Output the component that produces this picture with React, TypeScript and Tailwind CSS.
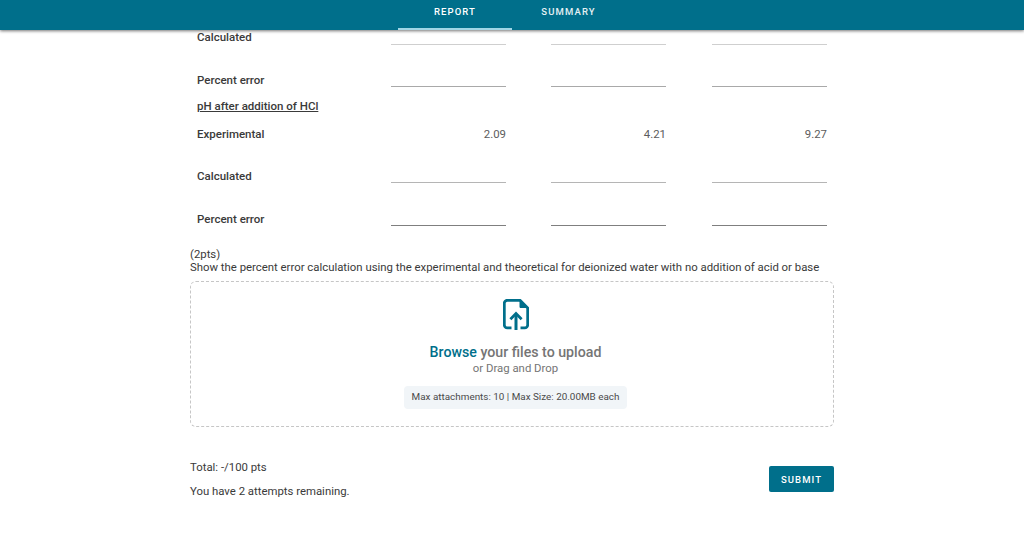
const Line = ({ color }: { color: string }) => <div className={`h-[1px] ${color}`} />;

function Row({ label, height, line, values, lift }: { label: string; height: string; line?: string; values?: string[]; lift?: boolean }) {
  return (
    <div className={`flex items-end ${height}`}>
      <div className={`w-[194px] h-[14px] text-[11.5px] leading-[14px] font-medium text-[#3a3a3a] ${lift ? "mb-[1px]" : ""}`}>{label}</div>
      {[0, 1, 2].map((i) => (
        <div key={i} className={`w-[115px] ${i === 1 ? "ml-[45px]" : i === 2 ? "ml-[46px]" : ""}`}>
          {values && <div className="h-[14px] text-right text-[11.375px] leading-[14px] text-[#5c5c5c]">{values[i]}</div>}
          {line && <Line color={line} />}
        </div>
      ))}
    </div>
  );
}

function UploadIcon() {
  return (
    <svg width="26" height="31" viewBox="0 0 26 31" fill="none" stroke="#006F8B" strokeWidth="2.8">
      <path d="M8.5 28.9H4.3a3 3 0 0 1-3-3V4.3a3 3 0 0 1 3-3H17l7.7 7.6v17a3 3 0 0 1-3 3H17.5" strokeLinejoin="round" />
      <path d="M17 2v6.5h7" fill="#006F8B" strokeWidth="1" />
      <path d="M13 31V15.5" strokeWidth="3" />
      <path d="M7.4 20.2L13 14.6l5.6 5.6" strokeWidth="2.8" />
    </svg>
  );
}

export default function App() {
  return (
    <div className="h-[545px] overflow-hidden bg-white font-['Roboto',sans-serif]">
      {/* Tabs */}
      <header className="relative z-10 flex h-[30px] justify-center bg-[#006F8B] shadow-[0_1px_3px_rgba(0,0,0,0.55)]">
        <div className="flex h-[30px] w-[114px] justify-center border-b-2 border-[#9fd6e6] pt-[5px] text-[9.5px] leading-[13px] tracking-[1.1px] font-medium text-white">REPORT</div>
        <div className="flex h-[30px] w-[114px] justify-center pt-[5px] pr-[1px] text-[9.5px] leading-[13px] tracking-[1.12px] font-medium text-[#e4f0f3]">SUMMARY</div>
      </header>

      <main className="mx-auto w-[644px]">
        {/* Table */}
        <div className="px-[7px]">
          <Row label="Calculated" height="h-[15px]" line="bg-[#cfcfcf]" lift />
          <Row label="Percent error" height="h-[42px]" line="bg-[#a9a9a9]" />
          <div className="flex h-[26px] items-end">
            <div className="h-[14px] text-[11.5px] leading-[14px] font-medium text-[#3a3a3a] underline">pH after addition of HCl</div>
          </div>
          <Row label="Experimental" height="h-[28px]" values={["2.09", "4.21", "9.27"]} />
          <Row label="Calculated" height="h-[42px]" line="bg-[#b5b5b5]" />
          <Row label="Percent error" height="h-[43px]" line="bg-[#7f7f7f]" />
        </div>

        {/* Question */}
        <div className="mt-[22px] text-[11.375px] leading-[13px] text-[#3a3a3a]">
          <div>(2pts)</div>
          <div>Show the percent error calculation using the experimental and theoretical for deionized water with no addition of acid or base</div>
        </div>

        {/* Upload */}
        <div className="mt-[7px] flex h-[146px] flex-col items-center rounded-[6px] border border-dashed border-[#c6c6c6] pt-[17px] pl-[7px]">
          <UploadIcon />
          <div className="mt-[13px] text-[14.2px] leading-[18px] font-medium text-[#757575]">
            <span className="text-[#006F8B]">Browse</span> your files to upload
          </div>
          <div className="text-[11.375px] leading-[14px] text-[#757575]">or Drag and Drop</div>
          <div className="mt-[11px] flex h-[23px] w-[223px] items-center justify-center rounded-[4px] bg-[#f1f5f8] text-[9.9px] text-[#4a4a4a]">Max attachments: 10 | Max Size: 20.00MB each</div>
        </div>

        {/* Footer */}
        <div className="mt-[33px] flex items-center justify-between">
          <div className="text-[11.375px] leading-[14px] text-[#3a3a3a]">
            <div>Total: -/100 pts</div>
            <div className="mt-[10px]">You have 2 attempts remaining.</div>
          </div>
          <button className="mb-[1px] h-[26px] w-[65px] rounded-[2px] bg-[#006F8B] pt-[3px] text-[9.5px] tracking-[1.1px] font-medium text-white">SUBMIT</button>
        </div>
      </main>
    </div>
  );
}
